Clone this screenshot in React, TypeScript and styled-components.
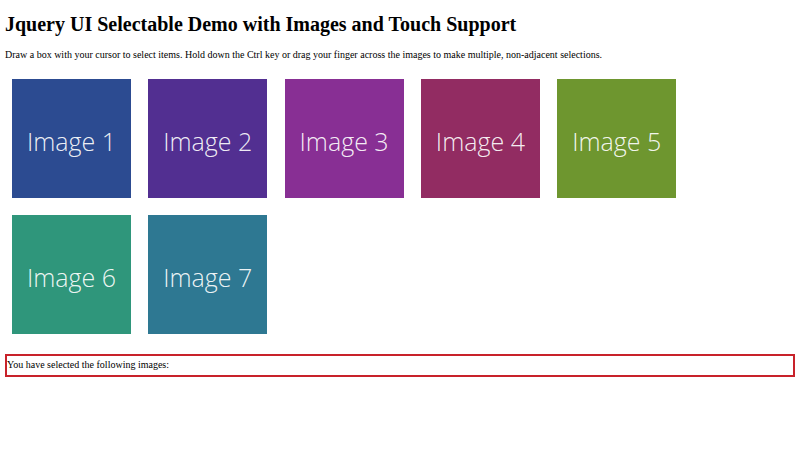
import React from 'react'
import styled, { createGlobalStyle } from 'styled-components'

const GlobalStyle = createGlobalStyle`
	body {
		margin: 0;
		background: #fff;
		color: #000;
		font-family: 'Liberation Serif', 'Times New Roman', serif;
	}
`

const images = [
	{ label: 'Image 1', color: '#2c4b91' },
	{ label: 'Image 2', color: '#522f91' },
	{ label: 'Image 3', color: '#882f94' },
	{ label: 'Image 4', color: '#922c62' },
	{ label: 'Image 5', color: '#6e962f' },
	{ label: 'Image 6', color: '#2f967b' },
	{ label: 'Image 7', color: '#2e7892' },
]

const App: React.FC = () => {
	return (
		<Page>
			<GlobalStyle />
			<Title>Jquery UI Selectable Demo with Images and Touch Support</Title>
			<Description>
				Draw a box with your cursor to select items. Hold down the Ctrl key or
				drag your finger across the images to make multiple, non-adjacent
				selections.
			</Description>
			<Selectable>
				{images.map(image => (
					<Tile key={image.label} $color={image.color}>
						{image.label}
					</Tile>
				))}
			</Selectable>
			<Result>You have selected the following images:</Result>
		</Page>
	)
}

export default App

const Page = styled.div`
	padding: 12px 5px 0;
`

const Title = styled.h1`
	margin: 0;
	font-size: 20px;
	line-height: 24px;
	font-weight: bold;
`

const Description = styled.p`
	margin: 13px 0 0;
	font-size: 10px;
	line-height: 12px;
	white-space: nowrap;
`

const Selectable = styled.div`
	display: grid;
	grid-template-columns: repeat(5, 119px);
	gap: 17px 17.3px;
	margin: 18px 0 0;
	padding-left: 7px;
`

const Tile = styled.div<{ $color: string }>`
	width: 119px;
	height: 119px;
	background: ${({ $color }) => $color};
	color: rgba(255, 255, 255, 0.92);
	display: flex;
	align-items: center;
	justify-content: center;
	font-family: 'Open Sans', 'Noto Sans', sans-serif;
	font-weight: 300;
	font-size: 25px;
	padding-top: 4px;
	box-sizing: border-box;
`

const Result = styled.div`
	margin-top: 20px;
	height: 23px;
	box-sizing: border-box;
	border: 2px solid #c8222a;
	padding: 0;
	font-size: 10px;
	line-height: 17px;
`
